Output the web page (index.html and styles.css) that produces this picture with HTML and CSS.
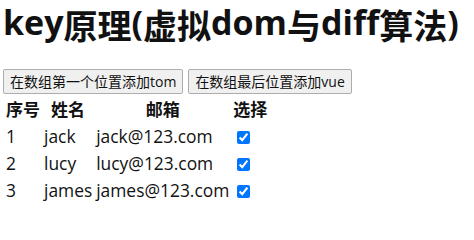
FILE: index.html
```html
<!DOCTYPE html>
<html lang="zh">
<head>
<meta charset="utf-8">
<title>key原理</title>
<link rel="stylesheet" href="styles.css">
</head>
<body>
<div class="page">
  <h1 class="title">key<span class="zh">原理</span>(<span class="zh">虚拟</span>dom<span class="zh">与</span>diff<span class="zh">算法</span>)</h1>
  <div class="actions">
    <button class="btn" type="button">在数组第一个位置添加tom</button>
    <button class="btn" type="button">在数组最后位置添加vue</button>
  </div>
  <table class="list">
    <thead>
      <tr><th>序号</th><th>姓名</th><th>邮箱</th><th>选择</th></tr>
    </thead>
    <tbody>
      <tr><td>1</td><td>jack</td><td>jack@123.com</td><td><input class="chk" type="checkbox" checked></td></tr>
      <tr><td>2</td><td>lucy</td><td>lucy@123.com</td><td><input class="chk" type="checkbox" checked></td></tr>
      <tr><td>3</td><td>james</td><td>james@123.com</td><td><input class="chk" type="checkbox" checked></td></tr>
    </tbody>
  </table>
</div>
</body>
</html>
```
FILE: styles.css
```css
html, body {
  margin: 0;
  padding: 0;
  background: #ffffff;
}

.page {
  padding: 2px 0 0 3px;
  font-family: "Open Sans", "Noto Sans CJK SC", sans-serif;
  color: #111111;
}

.title {
  margin: 0;
  height: 42px;
  font-size: 34px;
  line-height: 40px;
  font-weight: 700;
  white-space: nowrap;
}

.title .zh {
  vertical-align: -0.12em;
  line-height: 1;
}

.actions {
  display: flex;
  gap: 5px;
  margin-top: 25px;
}

.btn {
  margin: 0;
  height: 25px;
  padding: 0 6px;
  border: 1px solid #adadad;
  border-radius: 2px;
  background: #f0f0f0;
  color: #111111;
  font-family: "Open Sans", "Noto Sans CJK SC", sans-serif;
  font-size: 14px;
  line-height: 21px;
  white-space: nowrap;
}

.list {
  margin-top: 3px;
  border-spacing: 2px;
  font-size: 17.4px;
}

.list th {
  padding: 1px;
  font-size: 17px;
  line-height: 20px;
  font-weight: 700;
  text-align: center;
}

.list td {
  padding: 1px;
  line-height: 22px;
  text-align: left;
  white-space: nowrap;
}

.chk {
  margin: 3px 3px 3px 4px;
  width: 13px;
  height: 13px;
  vertical-align: -2px;
}
```
